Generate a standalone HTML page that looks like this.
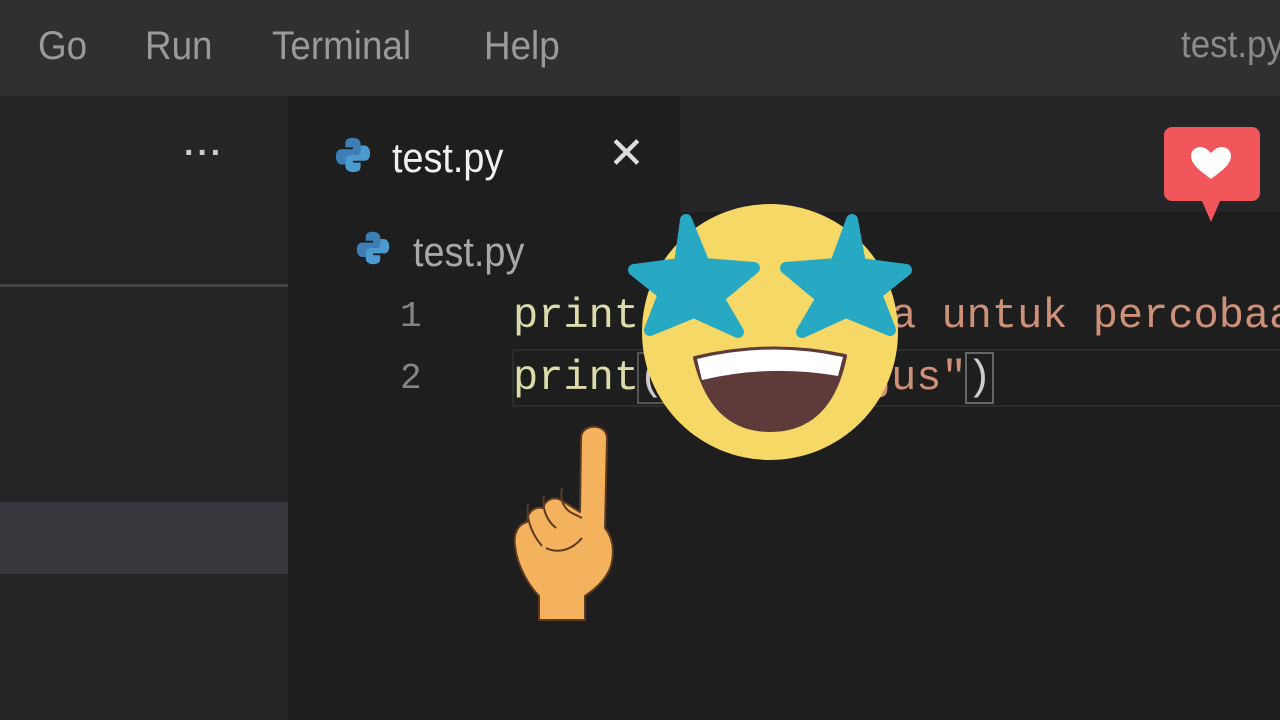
<!DOCTYPE html>
<html><head><meta charset="utf-8"><style>
body{margin:0;width:1280px;height:720px;overflow:hidden;background:#1e1e1e;position:relative;font-family:"Liberation Sans",sans-serif}
.a{position:absolute}
.menu{left:0;top:0;width:1280px;height:96px;background:#303033;overflow:hidden}
.menu span{position:absolute;top:24px;font-size:40px;color:#9a9a9a;transform-origin:left top;transform:scaleX(.92)}
.side{left:0;top:96px;width:288px;height:624px;background:#252527}
.tabbar{left:680px;top:96px;width:600px;height:116px;background:#252527}
.code{font-family:"Liberation Mono",monospace;font-size:42px;white-space:pre;color:#dcdcaa}
.s{color:#ce9178}
.ln{font-family:"Liberation Mono",monospace;font-size:36px;color:#858585}
</style></head><body>
<div class="a menu">
<span style="left:38px">Go</span><span style="left:145px">Run</span><span style="left:272px">Terminal</span><span style="left:484px">Help</span>
<span style="left:1181px;font-size:38px;color:#8a8a8a">test.py</span>
</div>
<div class="a side"></div>
<div class="a" style="left:184px;top:134px;color:#ccc;font-size:34px;letter-spacing:2px;font-weight:bold">···</div>
<div class="a" style="left:0;top:284px;width:288px;height:3px;background:#444"></div>
<div class="a" style="left:0;top:502px;width:288px;height:72px;background:#38373d"></div>
<div class="a tabbar"></div>
<svg class="a" style="left:334px;top:136px" width="38" height="38" viewBox="0 0 20 20"><path d="M10 1c-4 0-4 2-4 3v2h4v1H4C2 7 1 8.5 1 11s1.5 4 3 4h2v-2.5C6 11 7 10 8.5 10h3C13 10 14 9 14 7.5V4c0-2-2-3-4-3z" fill="#3d7fb5"/><path d="M10 19c4 0 4-2 4-3v-2h-4v-1h6c2 0 3-1.5 3-4s-1.5-4-3-4h-2v2.5C14 9 13 10 11.5 10h-3C7 10 6 11 6 12.5V16c0 2 2 3 4 3z" fill="#4b9ad0"/></svg>
<div class="a" style="left:392px;top:134px;font-size:42px;color:#f0f0f0;transform-origin:left top;transform:scaleX(.9)">test.py</div>
<div class="a" style="left:608px;top:128px;font-size:44px;color:#ddd">✕</div>
<svg class="a" style="left:355px;top:230px" width="36" height="36" viewBox="0 0 20 20"><path d="M10 1c-4 0-4 2-4 3v2h4v1H4C2 7 1 8.5 1 11s1.5 4 3 4h2v-2.5C6 11 7 10 8.5 10h3C13 10 14 9 14 7.5V4c0-2-2-3-4-3z" fill="#3d7fb5"/><path d="M10 19c4 0 4-2 4-3v-2h-4v-1h6c2 0 3-1.5 3-4s-1.5-4-3-4h-2v2.5C14 9 13 10 11.5 10h-3C7 10 6 11 6 12.5V16c0 2 2 3 4 3z" fill="#4b9ad0"/></svg>
<div class="a" style="left:413px;top:228px;font-size:42px;color:#a8a8a8;transform-origin:left top;transform:scaleX(.9)">test.py</div>
<div class="a" style="left:512px;top:349px;width:768px;height:58px;border:2px solid #2c2c2c;border-right:none;box-sizing:border-box"></div>
<div class="a ln" style="left:400px;top:296px">1</div>
<div class="a ln" style="left:400px;top:358px">2</div>
<div class="a" style="left:513px;top:280px;width:767px;height:140px;overflow:hidden">
<div class="a code" style="left:0;top:12px">print(<span class="s">"Hai semua untuk percobaan"</span>)</div>
<div class="a code" style="left:0;top:74px">print<span style="outline:2px solid #555;color:#ccc">(</span><span class="s">"Cara bagus"</span><span style="outline:2px solid #666;color:#ccc">)</span></div>
</div>
<!-- heart notification -->
<svg class="a" style="left:1164px;top:127px" width="96" height="96" viewBox="0 0 96 96"><path d="M8 0h80a8 8 0 0 1 8 8v58a8 8 0 0 1-8 8H56L47 95 38 74H8a8 8 0 0 1-8-8V8a8 8 0 0 1 8-8z" fill="#f0565a"/><path d="M47 52C38 45 27 38 27 29c0-5 4-9 9-9 5 0 8 3 11 6 3-3 6-6 11-6 5 0 9 4 9 9 0 9-11 16-20 23z" fill="#fff"/></svg>
<!-- star eyes emoji -->
<svg class="a" style="left:0;top:0" width="1280" height="720">
<ellipse cx="770" cy="332" rx="128" ry="128" fill="#f5d866"/>
<path d="M686 220 L704 264 L754 268 L718 298 L738 332 L694 312 L650 330 L664 294 L634 270 L680 264Z" fill="#27a9c4" stroke="#27a9c4" stroke-width="12" stroke-linejoin="round"/>
<path d="M852 220 L860 264 L906 270 L876 294 L890 330 L846 312 L802 332 L822 298 L786 268 L836 264Z" fill="#27a9c4" stroke="#27a9c4" stroke-width="12" stroke-linejoin="round"/>
<path d="M695 358 Q770 340 845 356 Q830 430 770 430 Q712 430 695 358Z" fill="#5e3a3a" stroke="#5e3a3a" stroke-width="4" stroke-linejoin="round"/>
<path d="M697 359 Q770 341 843 357 L838 376 Q770 364 702 380Z" fill="#fff"/>
</svg>
<!-- pointing hand -->
<svg class="a" style="left:0;top:0" width="1280" height="720">
<path d="M581 438c0-15 26-15 26 0l-2 90c8 10 10 22 6 38-4 12-14 22-26 30v24h-46v-24c-10-10-22-30-24-50-2-14 4-22 12-24 0-10 8-16 16-14 2-8 10-12 18-8 L580 512Z" fill="#f5b25e" stroke="#5a3a20" stroke-width="2" stroke-linejoin="round"/>
<path d="M528 504c-2 16 4 30 14 42M544 496c-2 12 2 24 12 32M562 488c-2 10 0 18 8 24l12 6M546 548c12 6 26 2 36-10" fill="none" stroke="#5a3a20" stroke-width="2"/>
</svg>
</body></html>
